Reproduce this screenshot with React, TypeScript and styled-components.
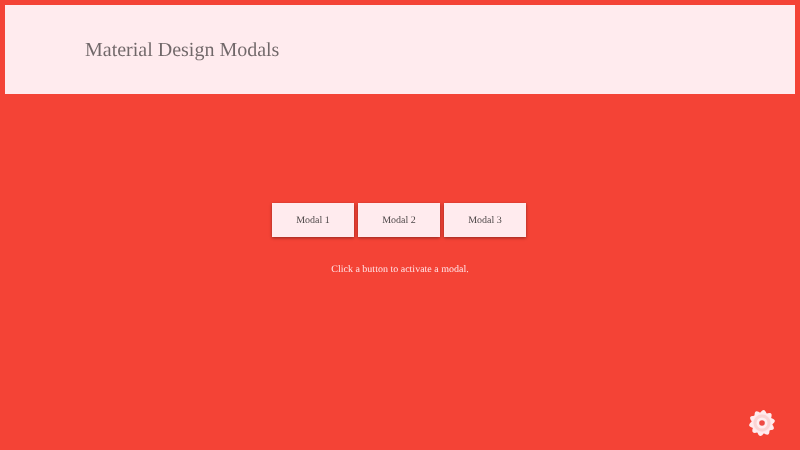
import React from "react";
import styled, { createGlobalStyle } from "styled-components";

const Global = createGlobalStyle`
  html, body { margin: 0; padding: 0; height: 100%; }
  #root { height: 100%; }
  body {
    background: #f44336;
    font-family: "Liberation Serif", serif;
    overflow: hidden;
    text-rendering: geometricPrecision;
  }
`;

const Page = styled.div`
  width: 800px;
  height: 450px;
  padding: 5px;
  box-sizing: border-box;
  background: #f44336;
  display: flex;
  flex-direction: column;
  position: relative;
`;

const Header = styled.header`
  height: 89px;
  background: #ffebee;
  display: flex;
  align-items: center;
  padding-left: 80px;
`;

const Title = styled.h1`
  margin: 0;
  font-size: 20px;
  font-weight: 400;
  color: rgba(0, 0, 0, 0.56);
  line-height: 1;
  filter: blur(0.3px);
`;

const Main = styled.main`
  display: flex;
  flex-direction: column;
  align-items: center;
  padding-top: 109px;
`;

const ButtonRow = styled.div`
  display: flex;
  gap: 4px;
  padding-right: 2px;
`;

const ModalButton = styled.button`
  width: 82px;
  height: 34px;
  border: 0;
  padding: 0;
  border-radius: 0;
  background: #ffebee;
  box-shadow: 0 1px 3px rgba(0, 0, 0, 0.4);
`;

const ButtonLabel = styled.span`
  display: block;
  color: rgba(0, 0, 0, 0.72);
  font-family: "Liberation Serif", serif;
  font-size: 10px;
  text-rendering: geometricPrecision;
  filter: blur(0.3px);
`;

const Hint = styled.p`
  margin: 25.5px 0 0;
  font-size: 10px;
  line-height: 13px;
  color: #ffe3e6;
  filter: blur(0.3px);
`;

const Flower = styled.svg`
  position: absolute;
  left: 748px;
  top: 409px;
  width: 28px;
  height: 28px;
  filter: blur(0.5px);
`;

const petals = Array.from({ length: 10 }, (_, i) => i * 36 + 8);

export default function App() {
  return (
    <Page>
      <Global />
      <Header>
        <Title>Material Design Modals</Title>
      </Header>
      <Main>
        <ButtonRow>
          <ModalButton><ButtonLabel>Modal 1</ButtonLabel></ModalButton>
          <ModalButton><ButtonLabel>Modal 2</ButtonLabel></ModalButton>
          <ModalButton><ButtonLabel>Modal 3</ButtonLabel></ModalButton>
        </ButtonRow>
        <Hint>Click a button to activate a modal.</Hint>
      </Main>
      <Flower viewBox="0 0 28 28">
        <circle cx="14" cy="14" r="10.5" fill="#ffe6e9" />
        {petals.map((a) => (
          <path key={a} d="M10.4 5 Q14 -3.2 17.6 5 Z" fill="#ffebee" transform={`rotate(${a} 14 14)`} />
        ))}
        <circle cx="14" cy="14" r="8.5" fill="#fbd4d4" />
        <circle cx="14" cy="14" r="5.5" fill="#ffeef0" />
        <circle cx="14" cy="14" r="2.8" fill="#ee4a44" />
      </Flower>
    </Page>
  );
}
